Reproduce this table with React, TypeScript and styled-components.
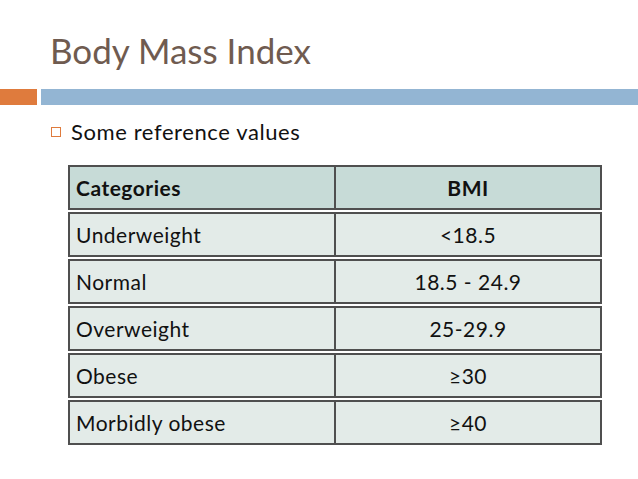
import styled, { createGlobalStyle } from 'styled-components'

const GlobalStyle = createGlobalStyle`
  body {
    margin: 0;
    background: #ffffff;
    font-family: 'Lato', 'Liberation Sans', sans-serif;
  }
`

const rows = [
  { category: 'Underweight', bmi: '<18.5' },
  { category: 'Normal', bmi: '18.5 - 24.9' },
  { category: 'Overweight', bmi: '25-29.9' },
  { category: 'Obese', bmi: '≥30' },
  { category: 'Morbidly obese', bmi: '≥40' }
]

function App() {
  return (
    <>
      <GlobalStyle />
      <Slide>
        <Title>Body Mass Index</Title>
        <RuleBar>
          <Accent />
          <Stripe />
        </RuleBar>
        <Bullet>
          <BulletBox />
          Some reference values
        </Bullet>
        <Table>
          <Row $header>
            <Cell $header>Categories</Cell>
            <Cell $header $center>
              BMI
            </Cell>
          </Row>
          {rows.map(({ category, bmi }) => (
            <Row key={category}>
              <Cell>{category}</Cell>
              <Cell $center>{bmi}</Cell>
            </Row>
          ))}
        </Table>
      </Slide>
    </>
  )
}

export default App

const Slide = styled.div`
  width: 638px;
  height: 479px;
  overflow: hidden;
  display: flex;
  flex-direction: column;
`

const Title = styled.h1`
  margin: 0;
  padding: 29px 0 0 50px;
  height: 59px;
  box-sizing: border-box;
  font-size: 35px;
  font-weight: 400;
  line-height: 42px;
  color: #6f5b50;
  letter-spacing: 0;
`

const RuleBar = styled.div`
  display: flex;
  gap: 4px;
  height: 16px;
  margin-top: 30px;
`

const Accent = styled.div`
  width: 37px;
  background: #df7b3d;
`

const Stripe = styled.div`
  flex: 1;
  background: #93b5d3;
`

const Bullet = styled.div`
  display: flex;
  align-items: center;
  margin: 15px 0 0 51px;
  font-size: 22px;
  line-height: 24px;
  letter-spacing: 0.6px;
  color: #111111;
`

const BulletBox = styled.span`
  width: 8px;
  height: 8px;
  border: 1.5px solid #df7b3d;
  margin-right: 10px;
  flex-shrink: 0;
`

const Table = styled.div`
  display: flex;
  flex-direction: column;
  gap: 2px;
  margin: 21px 0 0 68px;
  width: 534px;
`

const Row = styled.div<{ $header?: boolean }>`
  display: grid;
  grid-template-columns: 264px 1fr;
  height: 45px;
  box-sizing: border-box;
  border: 2px solid #4f4f4f;
  background: ${({ $header }) => ($header ? '#c7dbd7' : '#e3ebe8')};
`

const Cell = styled.div<{ $header?: boolean; $center?: boolean }>`
  display: flex;
  align-items: center;
  justify-content: ${({ $center }) => ($center ? 'center' : 'flex-start')};
  padding-left: ${({ $center }) => ($center ? '0' : '6px')};
  font-size: 21px;
  font-weight: ${({ $header }) => ($header ? 700 : 400)};
  letter-spacing: 0.5px;
  color: #111111;
  & + & {
    border-left: 2px solid #4f4f4f;
  }
`
